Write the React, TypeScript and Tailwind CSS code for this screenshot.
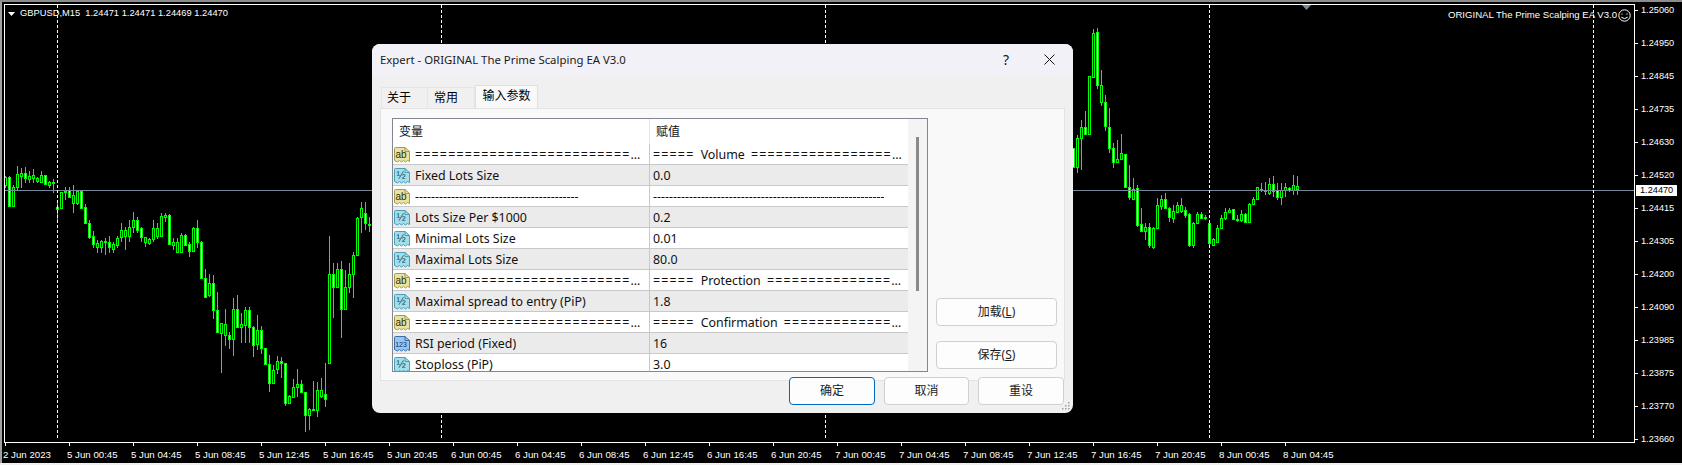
// [x, high, bodyTop, bodyBottom, low, filled] in 3x pixels, read off the reference
type Candle = [number, number, number, number, number, number];

const leftCandles: Candle[] = [
  [16, 528, 530, 555, 565, 0], [28, 528, 532, 617, 622, 1], [40, 555, 560, 617, 617, 0], [52, 498, 523, 560, 570, 0],
  [64, 505, 519, 527, 565, 0], [76, 502, 520, 535, 548, 1], [88, 512, 529, 537, 548, 0], [100, 508, 526, 535, 548, 0],
  [112, 530, 535, 543, 550, 0], [124, 514, 526, 545, 550, 0], [136, 524, 526, 553, 555, 1], [148, 542, 546, 554, 565, 0],
  [160, 538, 546, 550, 578, 1], [172, 600, 622, 626, 660, 1], [184, 575, 577, 625, 627, 0], [196, 560, 572, 574, 600, 1],
  [208, 562, 570, 590, 592, 1], [220, 555, 586, 608, 640, 0], [232, 570, 572, 608, 615, 0], [244, 572, 574, 624, 628, 1],
  [256, 612, 620, 670, 672, 1], [268, 660, 670, 712, 716, 1], [280, 693, 708, 732, 745, 1], [292, 720, 728, 742, 758, 0],
  [304, 720, 724, 742, 758, 0], [316, 715, 724, 727, 765, 1], [328, 708, 727, 742, 758, 1], [340, 725, 732, 746, 758, 0],
  [352, 708, 715, 734, 745, 0], [364, 670, 690, 712, 725, 0], [376, 680, 690, 708, 750, 0], [388, 660, 680, 708, 725, 0],
  [400, 636, 660, 680, 700, 0], [412, 650, 660, 690, 700, 1], [424, 680, 685, 710, 725, 1], [436, 710, 712, 725, 742, 0],
  [448, 715, 718, 728, 735, 0], [460, 660, 685, 718, 725, 0], [472, 670, 685, 708, 718, 0], [484, 640, 648, 707, 710, 0],
  [496, 640, 644, 652, 665, 0], [508, 642, 644, 732, 735, 1], [520, 715, 725, 735, 750, 0], [532, 715, 725, 755, 755, 0],
  [544, 700, 705, 755, 758, 0], [556, 703, 706, 735, 738, 1], [568, 725, 732, 752, 770, 1], [580, 680, 685, 752, 755, 0],
  [592, 660, 685, 725, 745, 1], [604, 723, 725, 833, 838, 1], [616, 808, 835, 890, 895, 1], [628, 822, 850, 885, 890, 0],
  [640, 825, 850, 930, 958, 1], [652, 875, 930, 995, 998, 1], [664, 968, 970, 998, 1118, 0], [676, 928, 973, 1006, 1038, 0],
  [688, 995, 1006, 1018, 1048, 1], [700, 895, 928, 1018, 1068, 0], [712, 885, 928, 980, 980, 1], [724, 940, 973, 980, 1028, 0],
  [736, 922, 930, 975, 1030, 0], [748, 922, 930, 982, 1030, 1], [760, 978, 982, 1035, 1070, 1], [772, 945, 990, 1033, 1050, 0],
  [784, 978, 990, 1045, 1062, 1], [796, 1045, 1045, 1093, 1095, 1], [808, 1065, 1093, 1148, 1175, 1], [820, 1095, 1110, 1148, 1150, 0],
  [832, 1068, 1082, 1108, 1122, 0], [844, 1070, 1082, 1090, 1135, 1], [856, 1090, 1090, 1210, 1218, 1], [868, 1185, 1188, 1210, 1212, 0],
  [880, 1137, 1162, 1190, 1190, 0], [892, 1108, 1153, 1160, 1190, 0], [904, 1140, 1153, 1175, 1177, 1], [916, 1175, 1175, 1246, 1295, 1],
  [928, 1225, 1228, 1246, 1290, 0], [940, 1143, 1228, 1230, 1230, 1], [952, 1145, 1170, 1230, 1250, 0], [964, 1135, 1170, 1187, 1195, 0],
  [976, 1090, 1183, 1198, 1220, 1], [988, 708, 822, 1090, 1090, 0], [1000, 790, 822, 862, 955, 1], [1012, 790, 808, 862, 865, 0],
  [1024, 783, 808, 928, 1015, 1], [1036, 810, 862, 928, 930, 0], [1048, 790, 822, 862, 880, 0], [1060, 755, 765, 823, 895, 0],
  [1072, 650, 655, 765, 768, 0], [1084, 605, 625, 650, 700, 0], [1096, 605, 640, 670, 690, 1], [1108, 650, 672, 675, 695, 1],
];

const rightCandles: Candle[] = [
  [3220, 445, 445, 500, 505, 1], [3232, 405, 415, 500, 518, 0], [3244, 360, 380, 415, 510, 0], [3256, 332, 380, 403, 405, 1],
  [3268, 228, 228, 403, 403, 0], [3280, 88, 100, 230, 232, 0], [3292, 85, 95, 256, 268, 1], [3304, 210, 256, 305, 318, 0],
  [3316, 285, 307, 378, 392, 1], [3328, 325, 380, 445, 460, 1], [3340, 430, 445, 485, 505, 1], [3352, 420, 478, 485, 488, 0],
  [3364, 402, 460, 478, 480, 0], [3376, 462, 462, 562, 565, 1], [3388, 495, 562, 592, 600, 1], [3400, 535, 568, 596, 600, 0],
  [3412, 555, 565, 675, 682, 1], [3424, 625, 673, 692, 695, 1], [3436, 670, 682, 692, 720, 0], [3448, 670, 682, 735, 745, 1],
  [3460, 680, 685, 740, 748, 0], [3472, 595, 615, 685, 688, 0], [3484, 585, 598, 618, 630, 0], [3496, 580, 596, 625, 628, 1],
  [3508, 620, 625, 652, 665, 1], [3520, 615, 633, 653, 668, 0], [3532, 605, 615, 635, 640, 0], [3544, 595, 616, 632, 640, 0],
  [3556, 622, 630, 645, 655, 1], [3568, 640, 642, 735, 740, 1], [3580, 665, 670, 735, 745, 0], [3592, 635, 642, 668, 670, 0],
  [3604, 635, 642, 655, 658, 1], [3616, 645, 652, 655, 660, 1], [3628, 670, 670, 730, 735, 1], [3640, 715, 718, 735, 738, 0],
  [3652, 675, 685, 725, 730, 0], [3664, 645, 655, 685, 688, 0], [3676, 625, 635, 655, 660, 0], [3688, 625, 629, 635, 640, 0],
  [3700, 627, 628, 658, 660, 1], [3712, 645, 656, 659, 665, 1], [3724, 630, 642, 660, 665, 0], [3736, 640, 643, 665, 668, 1],
  [3748, 608, 612, 665, 668, 0], [3760, 590, 598, 613, 615, 0], [3772, 560, 562, 598, 600, 0], [3784, 548, 566, 570, 575, 1],
  [3796, 545, 569, 573, 585, 1], [3808, 535, 553, 578, 585, 0], [3820, 528, 553, 572, 590, 1], [3832, 550, 570, 590, 600, 1],
  [3844, 548, 570, 592, 615, 0], [3856, 550, 562, 570, 590, 0], [3868, 560, 563, 569, 575, 1], [3880, 525, 556, 570, 585, 0],
  [3892, 527, 557, 568, 585, 0],
];

const prices = ['1.25060', '1.24950', '1.24845', '1.24735', '1.24630', '1.24520', '1.24415', '1.24305', '1.24200', '1.24090', '1.23985', '1.23875', '1.23770', '1.23660'];

const times = [
  '2 Jun 2023', '5 Jun 00:45', '5 Jun 04:45', '5 Jun 08:45', '5 Jun 12:45', '5 Jun 16:45', '5 Jun 20:45',
  '6 Jun 00:45', '6 Jun 04:45', '6 Jun 08:45', '6 Jun 12:45', '6 Jun 16:45', '6 Jun 20:45',
  '7 Jun 00:45', '7 Jun 04:45', '7 Jun 08:45', '7 Jun 12:45', '7 Jun 16:45', '7 Jun 20:45',
  '8 Jun 00:45', '8 Jun 04:45',
];

const EQ = '='.repeat(60);

type Kind = 'ab' | 'half' | 'num';
const rows: { kind: Kind; name: string; value: string }[] = [
  { kind: 'ab', name: EQ, value: '===== Volume ' + EQ },
  { kind: 'half', name: 'Fixed Lots Size', value: '0.0' },
  { kind: 'ab', name: '-'.repeat(41), value: '-'.repeat(58) },
  { kind: 'half', name: 'Lots Size Per $1000', value: '0.2' },
  { kind: 'half', name: 'Minimal Lots Size', value: '0.01' },
  { kind: 'half', name: 'Maximal Lots Size', value: '80.0' },
  { kind: 'ab', name: EQ, value: '===== Protection ' + EQ },
  { kind: 'half', name: 'Maximal spread to entry (PiP)', value: '1.8' },
  { kind: 'ab', name: EQ, value: '===== Confirmation ' + EQ },
  { kind: 'num', name: 'RSI period (Fixed)', value: '16' },
  { kind: 'half', name: 'Stoploss (PiP)', value: '3.0' },
];

const iconStyle: Record<Kind, { fill: string; stroke: string; ink: string; label: string; size: number }> = {
  ab: { fill: '#e9e39f', stroke: '#a39a55', ink: '#2e2b08', label: 'ab', size: 10 },
  half: { fill: '#a3dfea', stroke: '#4a9fb8', ink: '#0d4a60', label: '½', size: 11 },
  num: { fill: '#9cc5ee', stroke: '#3a6fae', ink: '#0b2f66', label: '123', size: 7 },
};

function ParamIcon({ kind }: { kind: Kind }) {
  const s = iconStyle[kind];
  return (
    <svg width="16" height="16" viewBox="0 0 16 16" className="shrink-0">
      <path
        d="M0.5 1.5 Q0.5 0.5 1.5 0.5 H11 L15.5 4.5 V14.5 L13.5 13.5 L11.5 15 L9.5 13.5 L7.5 15 L5.5 13.5 L3.5 15 L0.5 13.5 Z"
        fill={s.fill}
        stroke={s.stroke}
      />
      <path d="M11 0.5 V4.5 H15.5" fill="none" stroke={s.stroke} />
      <text x="7" y="11" textAnchor="middle" fontSize={s.size} fontFamily="'Liberation Sans', sans-serif" fill={s.ink}>
        {s.label}
      </text>
    </svg>
  );
}

// runs of = are wider in the reference font than in Noto Sans
function CellText({ text }: { text: string }) {
  return (
    <span className={`truncate ${text.includes('=') ? '[word-spacing:3px]' : ''}`}>
      {text.split(/(=+)/).map((part, i) =>
        part.startsWith('=') ? (
          <span key={i} className="tracking-[1.2px]">
            {part}
          </span>
        ) : (
          part
        ),
      )}
    </span>
  );
}

function CandleMark({ c }: { c: Candle }) {
  const [x3, high, top, bottom, low, filled] = c;
  const px = Math.floor(x3 / 3);
  const y1 = Math.round(top / 3);
  const y2 = Math.round(bottom / 3);
  return (
    <g>
      <line x1={px + 0.5} x2={px + 0.5} y1={Math.round(high / 3)} y2={Math.round(low / 3)} stroke="#00ff00" />
      <rect
        x={px - 0.5}
        y={y1 + 0.5}
        width={2}
        height={Math.max(y2 - y1, 1)}
        fill={filled ? '#ffffff' : '#000000'}
        stroke="#00ff00"
      />
    </g>
  );
}

function Chart() {
  return (
    <svg width="1629" height="437" viewBox="5 5 1629 437" className="block" shapeRendering="crispEdges">
      {leftCandles.map((c) => (
        <CandleMark key={c[0]} c={c} />
      ))}
      {rightCandles.map((c) => (
        <CandleMark key={c[0]} c={c} />
      ))}
      <line x1="5" x2="1634" y1="190.5" y2="190.5" stroke="#778899" />
      {[57, 441, 825, 1209, 1593].map((x) => (
        <line key={x} x1={x + 0.5} x2={x + 0.5} y1="5" y2="439" stroke="#ffffff" strokeDasharray="3 2" />
      ))}
      <polygon points="1302,5 1311,5 1306.5,10" fill="#778899" shapeRendering="auto" />
    </svg>
  );
}

function Smiley() {
  return (
    <svg width="13" height="13" viewBox="0 0 13 13" fill="none" stroke="#ffffff" strokeWidth="1" className="shrink-0">
      <circle cx="6.5" cy="6.5" r="5.7" />
      <path d="M4 4.5v1.2M9 4.5v1.2" />
      <path d="M3.3 8.2q3.2 2.8 6.4 0" />
    </svg>
  );
}

function WinButton({ label, hot, primary, className }: { label: string; hot?: string; primary?: boolean; className: string }) {
  return (
    <div
      className={`flex h-[28px] items-center justify-center rounded-[4px] border bg-[#fdfdfd] text-[12px] text-[#1b1b1b] ${
        primary ? 'border-[#0067c0]' : 'border-[#d0d0d0]'
      } ${className}`}
    >
      {label}
      {hot && (
        <>
          (<span className="underline">{hot}</span>)
        </>
      )}
    </div>
  );
}

function Dialog() {
  return (
    <div className="absolute top-[44px] left-[372px] flex h-[369px] w-[701px] flex-col overflow-hidden rounded-[8px] bg-[#f0f0f0] text-black">
      {/* Title bar */}
      <div className="flex h-[31px] shrink-0 items-center bg-[#f3f1f8] pl-[8px]">
        <span className="flex-1 text-[11.4px] text-[#1a1a1a]">Expert - ORIGINAL The Prime Scalping EA V3.0</span>
        <span className="mr-[35px] text-[14px] leading-none text-[#111]">?</span>
        <svg width="11" height="11" viewBox="0 0 11 11" className="mr-[18px]" stroke="#111" fill="none">
          <path d="M0.5 0.5l10 10M10.5 0.5l-10 10" />
        </svg>
      </div>

      {/* Tabs */}
      <div className="flex h-[33px] shrink-0 items-end pl-[9px] text-[12px]">
        <div className="flex h-[21px] w-[47px] items-center border-t border-r border-l border-[#e5e5e5] bg-[#f0f0f0] pl-[5px]">关于</div>
        <div className="flex h-[21px] w-[47px] items-center border-t border-r border-[#e5e5e5] bg-[#f0f0f0] pl-[6px]">常用</div>
        <div className="flex h-[23px] w-[63px] items-center justify-center border-t border-r border-l border-[#e0e0e0] bg-[#f9f9f9] pb-[2px]">输入参数</div>
      </div>

      {/* Tab panel */}
      <div className="mx-[8px] flex h-[273px] shrink-0 gap-[8px] border border-[#e3e3e3] bg-[#f9f9f9] pt-[9px] pr-[10px] pl-[11px]">
        <div className="flex h-[254px] w-[536px] shrink-0 overflow-hidden border border-[#828790] bg-white text-[12.4px] text-[#111]">
          <div className="w-[515px] shrink-0">
            <div className="grid h-[25px] grid-cols-[256px_1fr] items-center text-[12px]">
              <div className="flex h-full items-center pl-[6px]">变量</div>
              <div className="flex h-full items-center border-l border-[#e5e5e5] pl-[6px]">赋值</div>
            </div>
            {rows.map((r, i) => (
              <div
                key={i}
                className={`grid h-[21px] grid-cols-[256px_1fr] border-b border-[#c8c8c8] ${i % 2 === 1 ? 'bg-[#ebebeb]' : 'bg-white'}`}
              >
                <div className="flex min-w-0 items-center pt-[2px] pr-[8px] pl-[1px]">
                  <ParamIcon kind={r.kind} />
                  <span className="ml-[5px] flex min-w-0">
                    <CellText text={r.name} />
                  </span>
                </div>
                <div className="flex min-w-0 items-center border-l border-[#c8c8c8] pt-[2px] pr-[2px] pl-[3px]">
                  <CellText text={r.value} />
                </div>
              </div>
            ))}
          </div>
          <div className="flex-1 bg-[#f4f4f4] pt-[18px] pl-[8px]">
            <div className="h-[154px] w-[3px] bg-[#8a8a8a]" />
          </div>
        </div>
        <div className="flex w-[121px] shrink-0 flex-col justify-end gap-[15px] pb-[11px]">
          <WinButton label="加载" hot="L" className="w-full" />
          <WinButton label="保存" hot="S" className="w-full" />
        </div>
      </div>

      {/* Bottom buttons sit over the panel edge */}
      <div className="relative -mt-[4px] flex justify-end gap-[9px] pr-[9px]">
        <WinButton label="确定" primary className="w-[86px]" />
        <WinButton label="取消" className="w-[85px]" />
        <WinButton label="重设" className="w-[86px]" />
      </div>

      {/* Resize grip */}
      <svg width="10" height="10" viewBox="0 0 10 10" className="absolute right-[2px] bottom-[2px]" fill="#a0a0a0">
        <rect x="7" y="1" width="1.5" height="1.5" />
        <rect x="4" y="4" width="1.5" height="1.5" />
        <rect x="7" y="4" width="1.5" height="1.5" />
        <rect x="1" y="7" width="1.5" height="1.5" />
        <rect x="4" y="7" width="1.5" height="1.5" />
        <rect x="7" y="7" width="1.5" height="1.5" />
      </svg>
    </div>
  );
}

export default function App() {
  return (
    <div
      className="relative flex h-[465px] w-[1682px] flex-col overflow-hidden bg-black text-white"
      style={{ fontFamily: "'Noto Sans', 'Noto Sans CJK SC', sans-serif" }}
    >
      <div className="h-[2px] shrink-0 bg-[#8c8c8c]" />
      <div className="flex min-h-0 flex-1">
        <div className="w-[2px] shrink-0 bg-[#a0a0a0]" />
        <div className="flex min-w-0 flex-1 flex-col pt-[2px] pl-[2px]">
          <div className="flex h-[439px] shrink-0">
            {/* Chart frame */}
            <div className="relative w-[1631px] shrink-0 border border-white">
              <Chart />
              <div className="absolute top-[2px] left-[3px] flex items-center gap-[5px] font-['Liberation_Sans',sans-serif] text-[9.33px] whitespace-pre">
                <svg width="7" height="4" viewBox="0 0 7 4" fill="#ffffff">
                  <polygon points="0,0 7,0 3.5,4" />
                </svg>
                <span>GBPUSD,M15  1.24471 1.24471 1.24469 1.24470</span>
              </div>
              <div className="absolute top-[3px] right-[3px] flex items-center gap-[1px] font-['Liberation_Sans',sans-serif] text-[9.6px]">
                <span>ORIGINAL The Prime Scalping EA V3.0</span>
                <Smiley />
              </div>
            </div>
            {/* Price axis */}
            <div className="relative -mt-[10px] flex flex-col font-['Liberation_Sans',sans-serif] text-[9.2px]">
              {prices.map((p) => (
                <div key={p} className="flex h-[33px] shrink-0 items-center">
                  <span className="h-px w-[3px] bg-white" />
                  <span className="ml-[3px]">{p}</span>
                </div>
              ))}
              <div className="absolute top-[191px] left-[1px] flex h-[11px] w-[41px] items-center bg-white pl-[4px] text-black">1.24470</div>
            </div>
          </div>
          {/* Time axis */}
          <div className="flex flex-1 font-['Liberation_Sans',sans-serif] text-[9.7px]">
            {times.map((t) => (
              <div key={t} className="w-[64px] shrink-0">
                <div className="ml-px h-[3px] w-px bg-white" />
                <div className="mt-[2px] -ml-px whitespace-nowrap">{t}</div>
              </div>
            ))}
          </div>
        </div>
      </div>
      <div className="h-[2px] shrink-0 bg-[#f0f0f0]" />
      <Dialog />
    </div>
  );
}
